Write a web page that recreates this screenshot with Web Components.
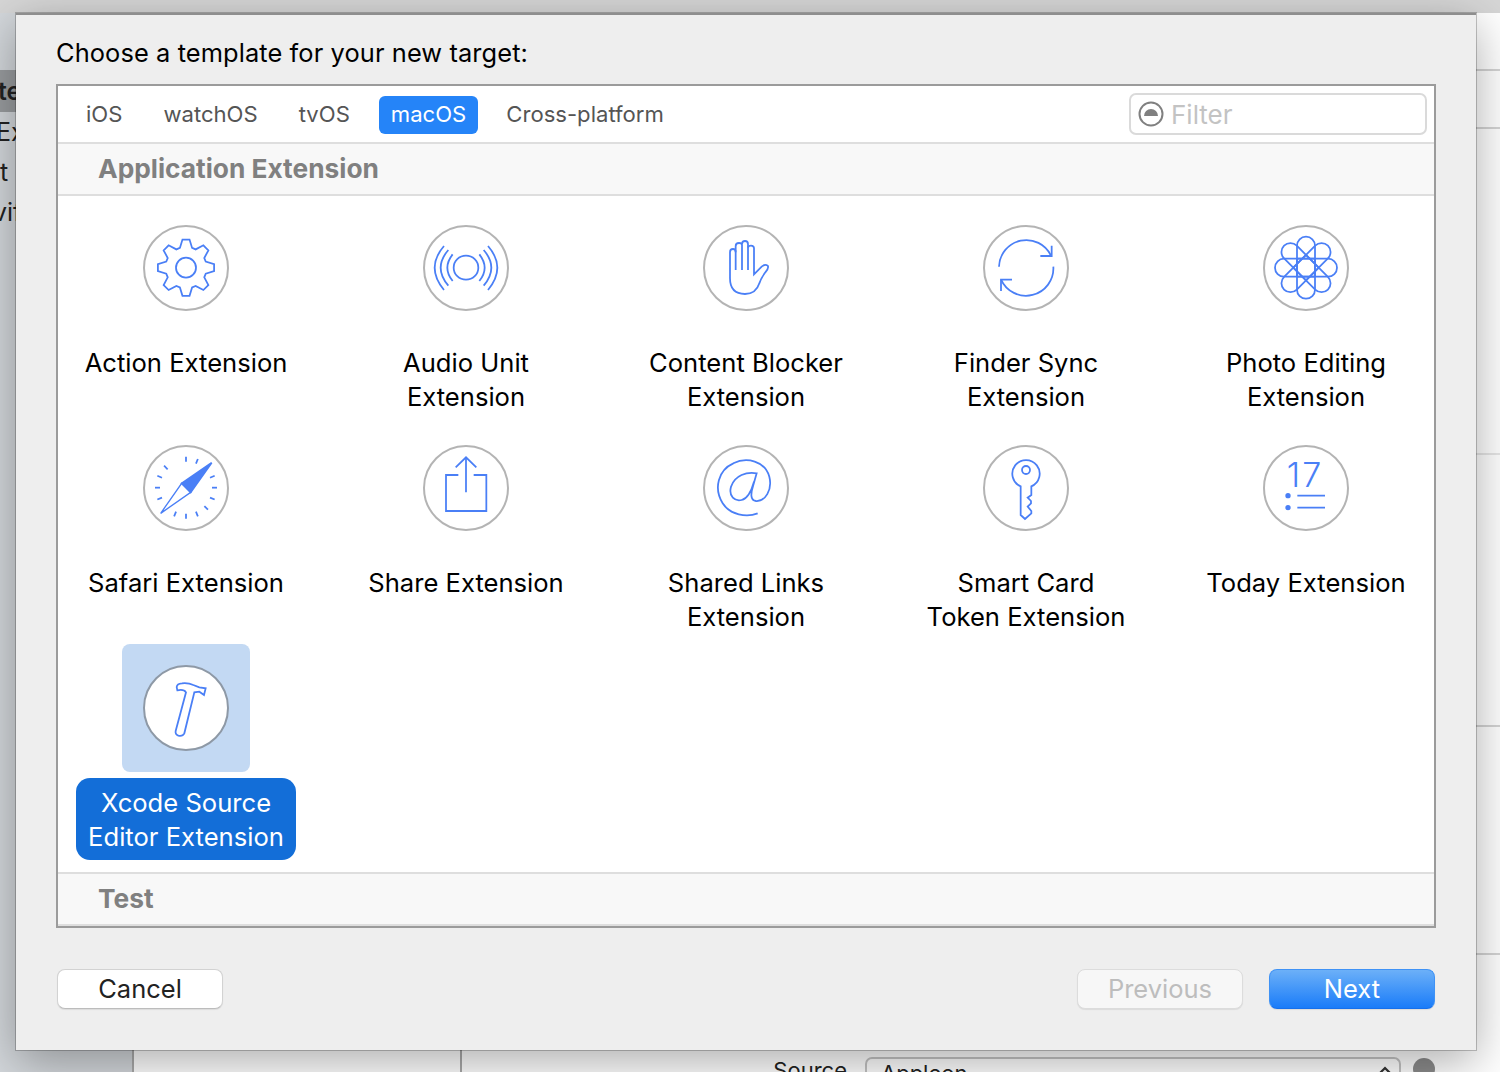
<!doctype html>
<html lang="en">
<head>
<meta charset="utf-8">
<title>Choose a template</title>
<style>
html,body{margin:0;padding:0;height:1072px;overflow:hidden;background:#fff;font-family:Inter,"Liberation Sans",sans-serif}
</style>
</head>
<body>
<xc-stage>
  <xc-backdrop></xc-backdrop>
  <xc-sheet heading="Choose a template for your new target:">
    <xc-tabbar slot="tabs">
      <xc-tab>iOS</xc-tab>
      <xc-tab>watchOS</xc-tab>
      <xc-tab>tvOS</xc-tab>
      <xc-tab active>macOS</xc-tab>
      <xc-tab>Cross-platform</xc-tab>
      <xc-filter slot="filter" placeholder="Filter"></xc-filter>
    </xc-tabbar>
    <xc-section-head slot="body">Application Extension</xc-section-head>
    <xc-grid slot="body">
      <xc-template icon="gear">Action Extension</xc-template>
      <xc-template icon="audio">Audio Unit<br>Extension</xc-template>
      <xc-template icon="hand">Content Blocker<br>Extension</xc-template>
      <xc-template icon="sync">Finder Sync<br>Extension</xc-template>
      <xc-template icon="flower">Photo Editing<br>Extension</xc-template>
      <xc-template icon="compass">Safari Extension</xc-template>
      <xc-template icon="share">Share Extension</xc-template>
      <xc-template icon="at">Shared Links<br>Extension</xc-template>
      <xc-template icon="key">Smart Card<br>Token Extension</xc-template>
      <xc-template icon="today">Today Extension</xc-template>
      <xc-template icon="hammer" selected>Xcode Source<br>Editor Extension</xc-template>
    </xc-grid>
    <xc-section-head slot="body">Test</xc-section-head>
    <xc-button slot="left">Cancel</xc-button>
    <xc-button slot="right" kind="disabled">Previous</xc-button>
    <xc-button slot="right" kind="primary">Next</xc-button>
  </xc-sheet>
</xc-stage>
<script>
const FONT = 'Inter,"Liberation Sans",sans-serif';
function define(name, css, html, extra){
  const tpl = document.createElement('template');
  tpl.innerHTML = `<style>${css}</style>${html}`;
  customElements.define(name, class extends HTMLElement{
    constructor(){ super(); this.attachShadow({mode:'open'}).appendChild(tpl.content.cloneNode(true)); }
    connectedCallback(){ if(extra) extra(this, this.shadowRoot); }
  });
}

/* Geometry for the icons that repeat a shape around a centre. Coordinates are the 3x zoom units. */
function gearPath(cx,cy){
  const n=8, P=[]; const pt=(r,a)=>[(cx+r*Math.sin(a)).toFixed(1),(cy-r*Math.cos(a)).toFixed(1)].join(' ');
  for(let i=0;i<n;i++){
    const a=i*Math.PI/4;
    P.push(pt(62,a-0.30), pt(85,a-0.125), pt(85,a+0.125), pt(62,a+0.30));
  }
  return 'M'+P.join('L')+'Z';
}
const flower=Array.from({length:8},(_,i)=>`<path transform="translate(168 158) rotate(${i*45})" d="M-27 26V-66A27 27 0 0 1 27 -66V26"/>`).join('');
const ticks=[0,22.5,67.5,90,112.5,135,157.5,180,202.5,247.5,270,292.5,315].map(a=>`<path transform="translate(168 158) rotate(${a})" d="M0 -78V-93"/>`).join('');
const mirror=(d)=>`<path d="${d}"/><path transform="translate(2016 0) scale(-1 1)" d="${d}"/>`;

const ICONS={
  gear:['39 30',`<path d="${gearPath(168,158)}"/><circle cx="168" cy="158" r="30"/>`],
  audio:['879 30',`<ellipse cx="1008" cy="158" rx="37" ry="36"/>`+mirror('M968 118Q936 158 968 198')+mirror('M955 105Q909 158 955 212')+mirror('M942 93Q886 158 942 225')],
  hand:['39 30',`<path d="M137 165V112Q137 102 129 102Q120 102 120 112V190Q120 237 165 237Q198 237 208 205Q214 188 226 172Q238 158 233 152Q225 146 215 155L192 178V100Q192 92 183 92Q175 92 174 98"/><path d="M156 165V90Q156 84 147 84Q137 84 137 94V112"/><path d="M174 165V88Q174 78 165 78Q156 78 156 88"/>`],
  sync:['879 30',`<path d="M927 155A82 82 0 0 1 1083 122"/><path d="M1051 123H1085V92"/><path d="M1090 155A82 82 0 0 1 933 193"/><path d="M966 194H933V228"/>`],
  flower:['39 30',flower],
  compass:['39 30',ticks+`<path d="M245 83L155 145L182 172Z" fill="currentColor"/><path d="M92 235L155 145L182 172Z" stroke-width="4"/>`],
  share:['879 30',`<path d="M985 120H948V228H1069V120H1031"/><path d="M1008 172V68"/><path d="M977 97L1008 67L1039 97"/>`],
  at:['39 30',`<path d="M203 235C170 248 120 240 98 205C70 160 85 105 130 85C170 65 225 78 238 125C248 165 225 200 198 198C180 196 182 175 190 150L200 115C170 110 135 120 123 155C115 185 135 200 155 195C175 190 185 165 192 140"/>`],
  key:['879 30',`<path d="M992 154A41 41 0 1 1 1024 154V180L1013 188L1023 198V205L1013 215L1024 228V235L1005 252L992 240Z"/><circle cx="1008" cy="105" r="12"/>`],
  today:['39 30',`<text x="165" y="155" text-anchor="middle" font-size="102" font-weight="300" letter-spacing="6" fill="currentColor" stroke="none" font-family='${FONT}'>17</text><circle cx="114" cy="182" r="8" fill="currentColor" stroke="none"/><circle cx="114" cy="218" r="8" fill="currentColor" stroke="none"/><path d="M142 182H225M142 218H225"/>`],
  hammer:['249 90',`<path d="M350 156Q351 146 366 145Q385 143 400 150L418 157L437 160L432 180L418 170L403 172L373 295Q368 305 355 302Q345 298 347 288L378 172Q372 162 352 166Z"/>`]
};

define('xc-stage',`:host{display:block;position:relative;width:1500px;height:1072px;overflow:hidden;background:#fff}`,`<slot></slot>`);

define('xc-backdrop',`
:host{display:flex;flex-direction:column;width:1500px;height:1072px;font:25px/40px ${FONT};color:#222}
.top{height:13px;background:#d6d6d6;flex:none}
.main{flex:1;display:flex;min-height:0}
.side{width:134px;flex:none;background:#d3d7db;box-sizing:border-box;padding-top:57px;overflow:hidden;border-right:2px solid #aaa}
.row{height:40px;line-height:40px;white-space:nowrap;text-indent:-4px}
.row.sel{height:42px;line-height:42px;background:#999c9f;font-weight:600;text-indent:-2px}
.row.t{text-indent:0}
.row.v{text-indent:-7px}
.col{width:326px;flex:none;background:#fff;border-right:2px solid #aaa}
.detail{flex:1;display:flex;flex-direction:column;background:#fff}
.line{flex:none;border-bottom:2px solid #d4d4d4;box-sizing:border-box}
.foot{margin-top:auto;display:flex;justify-content:flex-end;align-items:flex-start;gap:18px;height:15px;padding-right:65px}
.src{font-size:22px;line-height:26px;height:15px}
.sel-box{width:536px;height:28px;box-sizing:border-box;border:2px solid #c4c4c4;border-bottom:0;border-radius:7px 7px 0 0;padding-left:14px;font-size:22px;line-height:28px;position:relative}
.sel-box svg{position:absolute;right:4px;top:4px}
.info{width:22px;height:22px;border-radius:50%;background:#8c8c8c;margin-left:-6px;margin-top:1px;flex:none}
`,`
<div class="top"></div>
<div class="main">
  <div class="side">
    <div class="row sel">te</div>
    <div class="row">Ex</div>
    <div class="row t">t</div>
    <div class="row v">vif</div>
  </div>
  <div class="col"></div>
  <div class="detail">
    <div class="line" style="height:58px"></div>
    <div class="line" style="height:58px"></div>
    <div class="line" style="height:326px;border-color:#e6e6e6"></div>
    <div class="line" style="height:272px"></div>
    <div class="line" style="height:228px"></div>
    <div class="foot">
      <div class="src">Source</div>
      <div class="sel-box">Appleon<svg width="20" height="14" viewBox="0 0 20 14"><path d="M3 12L10 5L17 12" fill="none" stroke="#333" stroke-width="2.200"/></svg></div>
      <div class="info"></div>
    </div>
  </div>
</div>`);

define('xc-sheet',`
:host{display:flex;flex-direction:column;box-sizing:border-box;position:absolute;left:16px;top:13px;width:1460px;height:1037px;background:#eeeeee;padding:1px 40px 0;border-top:2px solid #8e8e8e;box-shadow:0 0 0 1px rgba(0,0,0,.22),0 12px 44px rgba(0,0,0,.33);font-family:${FONT}}
h1{margin:20px 0 14px;font-size:25.400px;font-weight:400;line-height:34px;height:34px;color:#000;letter-spacing:.1px;white-space:nowrap}
.box{width:1380px;height:844px;box-sizing:border-box;border:2px solid #9b9b9b;background:#fff;display:flex;flex-direction:column;flex:none}
.foot{display:flex;justify-content:space-between;width:1380px;box-sizing:border-box;margin-top:41px;padding:0 1px}
.r{display:flex;gap:26px}
`,`<h1></h1>
<div class="box"><slot name="tabs"></slot><slot name="body"></slot></div>
<div class="foot"><div><slot name="left"></slot></div><div class="r"><slot name="right"></slot></div></div>`,
(el,sr)=>{sr.querySelector('h1').textContent=el.getAttribute('heading');});

define('xc-tabbar',`
:host{display:flex;align-items:center;height:58px;box-sizing:border-box;border-bottom:2px solid #dedede;padding:2px 7px 0 16px;flex:none}
.f{margin-left:auto}
`,`<slot></slot><div class="f"><slot name="filter"></slot></div>`);

define('xc-tab',`
:host{display:block;width:max-content;height:38px;line-height:36px;padding:0 12px;margin-right:17px;border-radius:6px;font-size:22.100px;color:#555;white-space:nowrap}
:host([active]){background:#2584f8;color:#fff;margin-right:16px}
`,`<slot></slot>`);

define('xc-filter',`
:host{display:flex;align-items:center;width:298px;height:42px;box-sizing:border-box;border:2px solid #dadada;border-radius:7px;padding-left:7px;gap:7px;font-size:26px;color:#c3c3c3;background:#fff;position:relative;top:-1px}
svg{flex:none}
span{padding-top:1px}
`,`<svg width="26" height="26" viewBox="0 0 26 26"><circle cx="13" cy="13" r="11.500" fill="none" stroke="#808080" stroke-width="2"/><path d="M6 15A7 7 0 0 1 20 15Z" fill="#808080"/></svg><span></span>`,
(el,sr)=>{sr.querySelector('span').textContent=el.getAttribute('placeholder');});

define('xc-section-head',`
:host{display:flex;align-items:center;flex:none;height:52px;box-sizing:border-box;background:#f8f8f8;border-bottom:2px solid #dedede;padding:0 0 2px 40px;font-size:26.300px;font-weight:700;color:#808080}
`,`<slot></slot>`);

define('xc-grid',`
:host{display:grid;grid-template-columns:repeat(5,1fr);grid-auto-rows:216px;column-gap:24px;row-gap:4px;height:678px;box-sizing:border-box;padding-top:8px;border-bottom:2px solid #dedede;flex:none;background:#fff}
`,`<slot></slot>`);

define('xc-template',`
:host{display:flex;flex-direction:column;align-items:center;font-size:25.600px;line-height:34px;color:#000;text-align:center}
.tile{width:128px;height:128px;border-radius:8px;display:flex;align-items:center;justify-content:center;flex:none}
.ring{width:86px;height:86px;box-sizing:border-box;border-radius:50%;border:2px solid #b4b4b4;background:#fff;position:relative}
svg{position:absolute;left:-2px;top:-2px;width:86px;height:86px;fill:none;stroke:currentColor;stroke-width:5.300;color:#4a7ff6;stroke-linejoin:miter}
.label{margin-top:6px;padding:8px 12px 6px;border-radius:14px;white-space:nowrap}
:host([selected]) .tile{background:#c3d9f3}
:host([selected]) .ring{border-color:#8e99a6}
:host([selected]) .label{background:#136ed8;color:#fff}
`,`<div class="tile"><div class="ring"></div></div><div class="label"><slot></slot></div>`,
(el,sr)=>{const [o,c]=ICONS[el.getAttribute('icon')];const [x,y]=o.split(' ');
  sr.querySelector('.ring').innerHTML=`<svg viewBox="${x} ${y} 258 258" aria-hidden="true">${c}</svg>`;});

define('xc-button',`
:host{display:flex;align-items:center;justify-content:center;width:166px;height:40px;box-sizing:border-box;padding-bottom:2px;border-radius:8px;background:#fff;border:1px solid #d2d2d2;border-bottom-color:#bcbcbc;box-shadow:0 1px 1px rgba(0,0,0,.08);font-size:25.500px;color:#222}
:host([kind=disabled]){background:#f7f7f7;color:#bdbdbd;border-color:#dcdcdc}
:host([kind=primary]){background:linear-gradient(#6cb0f8,#1a7cf9);color:#fff;border-color:#3f92f5;border-bottom-color:#1670ec}
`,`<slot></slot>`);
</script>
</body>
</html>
